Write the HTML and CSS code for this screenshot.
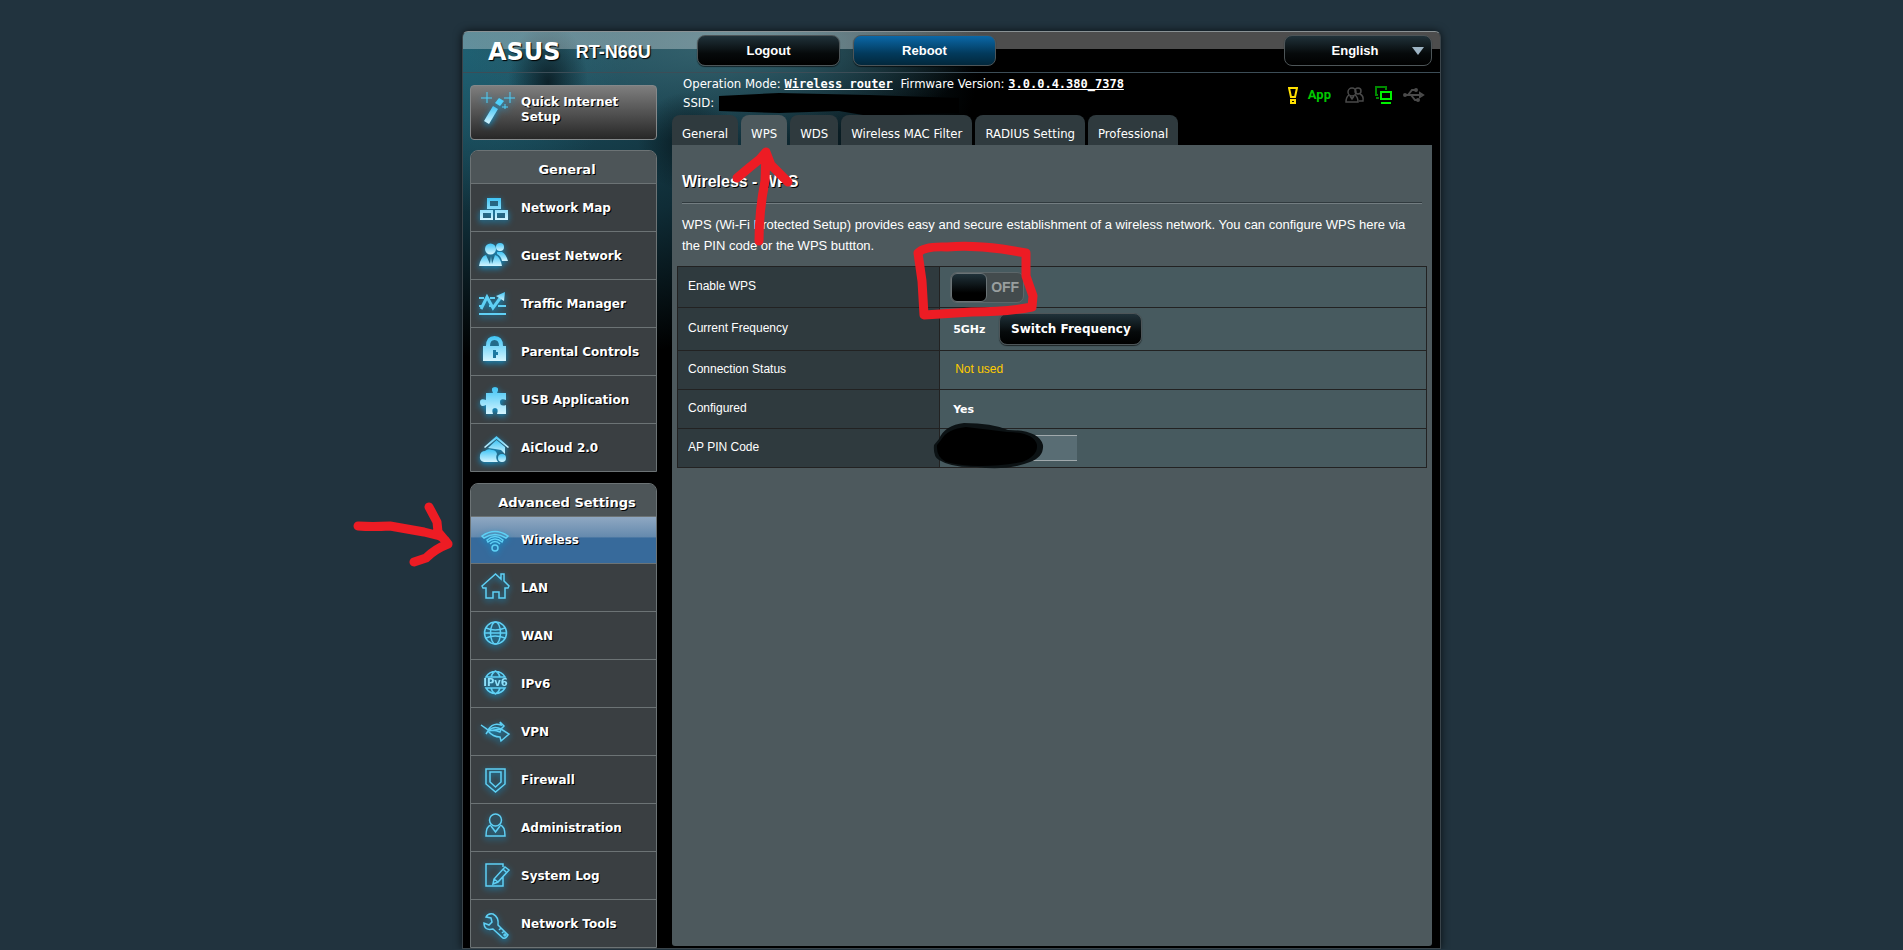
FILE: index.html
```html
<!doctype html>
<html lang="en">
<head>
    <meta charset="utf-8">
    <title>ASUS Wireless Router RT-N66U - WPS</title>
    <link rel="stylesheet" href="styles.css">
</head>

<body>
<div class="wrapper">
    <!-- top banner -->
    <header class="banner">
        <div class="brand"><span class="logo">ASUS</span><span class="model">RT-N66U</span></div>
        <button class="btn top-btn">Logout</button>
        <button class="btn top-btn reboot">Reboot</button>
        <div class="lang">
            <select class="btn lang-select" aria-label="Language">
                <option>English</option>
            </select>
            <span class="lang-arrow"></span>
        </div>
    </header>

    <div class="columns">
        <!-- left menu -->
        <nav class="sidebar">
            <a class="quick" href="#">
                <svg class="quick-icon" width="40" height="40" viewBox="0 0 40 40">
                    <defs>
                        <linearGradient id="ice" x1="0" y1="0" x2="0" y2="1">
                            <stop offset="0" stop-color="#3fc4f5"/>
                            <stop offset="1" stop-color="#d4f5ff"/>
                        </linearGradient>
                    </defs>
                    <path d="M5 31L14 16L19 19L10 34Z" fill="url(#ice)"/>
                    <path d="M16 13L20 8L25 11L21 16Z" fill="#4fd0fa"/>
                    <path d="M8 2V13M2 8H13M31 2V13M25 8H36M26 14V19M23 17H29" stroke="#4fd0fa" fill="none"/>
                </svg>
                <span>Quick Internet Setup</span>
            </a>

            <section class="menu">
                <h2>General</h2>
                <a class="item" href="#">
                    <svg class="icon solid" viewBox="0 0 32 32"><path fill-rule="evenodd" d="M8 6H22V17H8ZM11 9V14H19V9ZM1 18H14V28H1ZM4 21V26H12V21ZM16 18H29V28H16ZM18 21V26H26V21Z"/></svg>
                    <span>Network Map</span>
                </a>
                <a class="item" href="#">
                    <svg class="icon solid" viewBox="0 0 32 32"><circle cx="21" cy="7" r="4"/><path d="M18 12H23Q27 14 29 21H23Q22 16 18 14Z"/><circle cx="11.500" cy="9" r="5.500"/><path d="M0 26Q2 16 7 15L11 24L12 16L13 24L16 15Q21 16 23 26Z"/></svg>
                    <span>Guest Network</span>
                </a>
                <a class="item" href="#">
                    <svg class="icon" viewBox="0 0 32 32"><path d="M0 10H5M11 10H16M0 18H3M10 18H12M19 18H27M0 26H27" stroke-width="2"/><path d="M2 21L8 9L14 20L22 9" stroke-width="3"/><path class="fill" d="M17 8L26 4L25 13Z"/></svg>
                    <span>Traffic Manager</span>
                </a>
                <a class="item" href="#">
                    <svg class="icon solid" viewBox="0 0 32 32"><path fill-rule="evenodd" d="M4 10H7Q7 0 15.500 0Q24 0 24 10H27V25H4ZM11 10H20Q20 4 15.500 4Q11 4 11 10ZM14 14V22H17V19H19V16H17V14Z"/></svg>
                    <span>Parental Controls</span>
                </a>
                <a class="item" href="#">
                    <svg class="icon solid" viewBox="0 0 32 32"><path d="M7 9H14Q11 3 16 3Q21 3 18 9H27V16Q21 14 21 18Q21 23 27 21V30H18Q20 24 16 24Q12 24 14 30H7V21Q1 24 1 18Q1 14 7 16Z"/></svg>
                    <span>USB Application</span>
                </a>
                <a class="item" href="#">
                    <svg class="icon solid" viewBox="0 0 32 32"><path d="M17.500 4L30 15L29 16L17.500 7L6 16L5 15Z"/><path d="M17.500 8L26 15V22L22 18L16 17L9 16Z"/><path d="M5 30Q0 29 1 23Q2 19 6 19Q9 16 13 18Q17 18 18 22Q16 26 19 30Z"/><circle cx="23" cy="26" r="4"/></svg>
                    <span>AiCloud 2.0</span>
                </a>
            </section>

            <section class="menu advanced">
                <h2>Advanced Settings</h2>
                <a class="item active" href="#">
                    <svg class="icon" viewBox="0 0 32 32"><circle cx="16" cy="24" r="3"/><path d="M3 12Q16 3 29 12L27 14Q16 7 5 14ZM8 16Q16 9 24 16L23 18Q16 12 9 18ZM11 20Q16 15 21 20"/></svg>
                    <span>Wireless</span>
                </a>
                <a class="item" href="#">
                    <svg class="icon" viewBox="0 0 32 32"><path d="M3 14L16.500 2L22 7V2H25V9L30 14L29 16H26V26H20V20H14V26H7V16H4Z"/></svg>
                    <span>LAN</span>
                </a>
                <a class="item" href="#">
                    <svg class="icon" viewBox="0 0 32 32"><circle cx="16.500" cy="13" r="11"/><ellipse cx="16.500" cy="13" rx="5" ry="11"/><path d="M7 8Q16 12 26 8M7 18Q16 14 26 18M6 13H27"/></svg>
                    <span>WAN</span>
                </a>
                <a class="item" href="#">
                    <svg class="icon" viewBox="0 0 32 32"><path d="M7 9A11 11 0 0 1 26 9ZM7 20A11 11 0 0 0 26 20ZM12 9Q13 5 16.500 3Q20 5 21 9M12 20Q13 24 16.500 26Q20 24 21 20"/><text x="16.500" y="18" text-anchor="middle" class="ip">IPv6</text></svg>
                    <span>IPv6</span>
                </a>
                <a class="item" href="#">
                    <svg class="icon" viewBox="0 0 32 32"><path d="M2 9L9 14Q14 6 22 9L21 6L25 10L22 13Q15 9 9 15Q15 13 21 16L22 13L30 18L22 25L21 21Q14 21 9 15L7 18M2 9L8 13M9 15L22 13"/></svg>
                    <span>VPN</span>
                </a>
                <a class="item" href="#">
                    <svg class="icon" viewBox="0 0 32 32"><path d="M7 5H26V20L16.500 28L7 20ZM11 8H22V18L16.500 23L11 18Z"/></svg>
                    <span>Firewall</span>
                </a>
                <a class="item" href="#">
                    <svg class="icon" viewBox="0 0 32 32"><circle cx="16.500" cy="8" r="6"/><path d="M12 13Q7 14 7 24H26Q26 14 21 13M12 14L16.500 20L21 14"/></svg>
                    <span>Administration</span>
                </a>
                <a class="item" href="#">
                    <svg class="icon" viewBox="0 0 32 32"><path d="M24 7V4H7V26H24V17M14 24L15 19L26 7L30 10L19 22ZM24 9L27 12M15 19L19 22"/></svg>
                    <span>System Log</span>
                </a>
                <a class="item" href="#">
                    <svg class="icon" viewBox="0 0 32 32"><path d="M7 9L12 10L13 14L10 17L5 15Q5 23 14 21L24 30Q27 31 29 27L19 17Q20 9 14 6Q9 5 7 9ZM20 22L22 20M23 25L25 23"/><circle cx="26" cy="27" r="1"/></svg>
                    <span>Network Tools</span>
                </a>
            </section>
        </nav>

        <main class="main">
            <div class="info">
                <div class="info-text">
                    <div>Operation Mode: <a href="#">Wireless router</a> <span class="fw">Firmware Version: <a href="#">3.0.0.4.380_7378</a></span></div>
                    <div class="ssid">SSID:
                        <svg class="redact-ssid" width="240" height="23" viewBox="0 0 240 23"><path d="M0 3L60 0L150 2L240 5V20L150 23L120 18L60 20L0 18Z"/></svg>
                    </div>
                </div>
                <div class="status">
                    <svg width="10" height="18" viewBox="0 0 10 18" fill="none" stroke="#ffe000" stroke-width="2"><path d="M1 2H9L7 11H3Z"/><path d="M3 14H7V17H3Z"/></svg>
                    <a class="app" href="#">App</a>
                    <svg width="20" height="18" viewBox="0 0 20 18" fill="none" stroke="#4a4a4a" stroke-width="1.500"><circle cx="13" cy="5" r="3"/><path d="M15 8Q19 10 18 15H14"/><circle cx="7" cy="6" r="4"/><path d="M4 9Q1 11 1 16H13Q13 11 10 9M5 10L7 13L9 10"/></svg>
                    <svg width="18" height="18" viewBox="0 0 18 18" fill="none" stroke-width="2"><path d="M3 9H1V1H11V4M1 12H4" stroke="#008a00"/><path d="M6 6H16V13H6ZM6 17H16" stroke="#00f000"/></svg>
                    <svg width="22" height="14" viewBox="0 0 22 14" fill="none" stroke="#4a4a4a" stroke-width="2"><path d="M1 7H18M5 7L9 2H13M8 7L12 12H15"/><circle cx="2" cy="7" r="1"/><path d="M17 5L20 7L17 9Z"/><circle cx="13" cy="2" r="1"/><circle cx="15" cy="12" r="1"/></svg>
                </div>
            </div>

            <div class="tabs">
                <a href="#">General</a>
                <a class="current" href="#">WPS</a>
                <a href="#">WDS</a>
                <a href="#">Wireless MAC Filter</a>
                <a href="#">RADIUS Setting</a>
                <a href="#">Professional</a>
            </div>

            <div class="panel">
                <h1>Wireless - WPS</h1>
                <p class="desc">WPS (Wi-Fi Protected Setup) provides easy and secure establishment of a wireless network. You can configure WPS here via the PIN code or the WPS buttton.</p>

                <table class="settings">
                    <tr class="row-wps">
                        <th><label for="wps">Enable WPS</label></th>
                        <td><input class="toggle" type="checkbox" id="wps"><label class="switch" for="wps"><span class="knob"></span><span class="state">OFF</span></label></td>
                    </tr>
                    <tr class="row-freq">
                        <th>Current Frequency</th>
                        <td><div class="freq"><b>5GHz</b><button class="btn freq-btn">Switch Frequency</button></div></td>
                    </tr>
                    <tr>
                        <th>Connection Status</th>
                        <td class="status-text">Not used</td>
                    </tr>
                    <tr>
                        <th>Configured</th>
                        <td><b>Yes</b></td>
                    </tr>
                    <tr>
                        <th><label for="pin">AP PIN Code</label></th>
                        <td class="pin-cell"><input class="pin" type="text" id="pin" readonly></td>
                    </tr>
                </table>
            </div>
        </main>
    </div>

    <!-- hand-drawn marks over the page, origin is the wrapper corner -->
    <svg class="marks" width="979" height="919" viewBox="0 0 979 919">
        <g class="blob">
            <path class="edge" d="M477 408Q483 394 502 392Q530 392 546 399Q577 399 581 414Q582 426 568 431Q545 440 515 436Q490 437 477 429Q471 426 472 414Z"/>
            <path d="M479 409Q485 398 504 396Q530 399 545 401Q572 401 575 414Q576 425 560 431Q515 439 484 431Q474 426 475 414Z"/>
        </g>
        <path class="red" d="M-104 495Q-90 496 -72 495Q-55 498 -38 501L-26 504Q-20 504 -14 513M-33 476L-25 491L-24 501L-14 513Q-27 518 -36 527L-48 531"/>
        <path class="red" d="M297 210Q297 180 303 150L304 122M275 147L288 136L298 128L304 121L309 134L326 151"/>
        <path class="red" d="M462 284L460 250L456 222Q462 215 485 216Q510 214 540 218L564 222L564 245L571 265L570 276Q545 281 510 281L462 284"/>
    </svg>
</div>
</body>
</html>
```
FILE: styles.css
```css
* {
    box-sizing: border-box;
}
body {
    margin: 0;
    background: #21333e;
    font: 12px "Liberation Sans", Arial, sans-serif;
    color: #fff;
    overflow: hidden;
}
a {
    color: #fff;
    text-decoration: none;
}

.wrapper {
    position: relative;
    width: 94%;
    max-width: 979px;
    margin: 31px auto 0;
    border: 1px solid #3a444a;
    border-top-color: #8a9295;
    border-radius: 6px 6px 0 0;
    box-shadow: 0 0 8px rgba(0, 0, 0, 0.7);
    background:
        radial-gradient(ellipse 40px 60px at 85px 50px, rgba(8, 20, 26, 0.8), transparent),
        radial-gradient(ellipse 50px 50px at 225px 110px, rgba(7, 21, 26, 0.8), transparent),
        radial-gradient(ellipse 260px 100px at 260px 10px, #366470, transparent),
        radial-gradient(ellipse 160px 160px at 0 20px, #1f6072, transparent),
        radial-gradient(ellipse 440px 330px at 80px 0, #1f5768, #0f2c36 60%, transparent),
        #000;
}

/* banner */
.banner {
    display: flex;
    align-items: flex-start;
    gap: 13px;
    height: 41px;
    padding: 3px 8px 0 25px;
    border-bottom: 1px solid #3c4d57;
    border-radius: 5px 5px 0 0;
    background: linear-gradient(rgba(255, 255, 255, 0.3), rgba(255, 255, 255, 0.3)) 0 0 / 100% 17px no-repeat;
}
.brand {
    display: flex;
    align-items: center;
    width: 196px;
    height: 34px;
    gap: 15px;
    text-shadow: 1px 1px 1px #000;
}
.logo {
    font: bold 24px "DejaVu Sans", Verdana, sans-serif;
}
.model {
    font-size: 18px;
    font-weight: bold;
}
.btn {
    border: 1px solid #4d5558;
    border-radius: 8px;
    background: linear-gradient(#20323a, #060a0b 60%, #000);
    color: #fff;
    font: bold 13px "Liberation Sans", Arial, sans-serif;
    box-shadow: 0 1px 1px rgba(0, 0, 0, 0.6);
}
.top-btn {
    width: 143px;
    height: 31px;
}
.reboot {
    background: linear-gradient(#0b68a8, #023a5c 60%, #02283c);
}
.lang {
    position: relative;
    margin-left: auto;
}
.lang-select {
    width: 148px;
    height: 31px;
    padding: 0 6px 0 0;
    appearance: none;
    text-align: center;
    text-align-last: center;
}
.lang-arrow {
    position: absolute;
    right: 8px;
    top: 12px;
    border: 6px solid transparent;
    border-top: 8px solid #9db4c4;
    border-bottom: 0;
    pointer-events: none;
}

.columns {
    display: grid;
    grid-template-columns: 187px 1fr;
    gap: 15px;
    padding: 0 8px 0 7px;
}

/* left menu */
.sidebar {
    padding-top: 12px;
    font: bold 12px "DejaVu Sans", Verdana, sans-serif;
    text-shadow: 1px 1px 0 #000;
}
.quick {
    display: flex;
    gap: 2px;
    height: 55px;
    padding: 4px 20px 0 8px;
    border: 1px solid #84888a;
    border-radius: 4px;
    background: linear-gradient(#7e7e7e, #272727);
    line-height: 15px;
}
.quick span {
    padding-top: 5px;
}
.quick-icon {
    flex: none;
}
.menu {
    margin-top: 10px;
    border: 1px solid #6c7375;
    border-radius: 8px 8px 0 0;
    background: #3a3f42;
    overflow: hidden;
}
.advanced {
    margin-top: 11px;
}
.menu h2 {
    margin: 0;
    height: 32px;
    padding-left: 7px;
    background: #4d5558;
    font-size: 13px;
    line-height: 37px;
    text-align: center;
}
.item {
    display: flex;
    align-items: center;
    gap: 10px;
    height: 48px;
    padding-left: 8px;
    border-top: 1px solid #6c7375;
}
.item.active {
    height: 47px;
    background: linear-gradient(#8fa8c2, #6489ad 44%, #376a9b 45%, #376a9b);
}
.icon {
    width: 32px;
    height: 32px;
    fill: none;
    stroke: #5fd0f5;
    stroke-width: 1.500;
}
.icon, .quick-icon {
    filter: drop-shadow(0 2px 3px #1093cc);
}
.icon.solid, .icon .fill {
    fill: url(#ice);
    stroke: none;
}
.ip {
    font: bold 10px "DejaVu Sans", sans-serif;
    fill: #8fe0fa;
    stroke: none;
    text-shadow: none;
}

/* operation mode, firmware, status icons */
.info {
    display: flex;
    justify-content: space-between;
    height: 42px;
    padding: 1px 7px 0 11px;
    font: 13px/19px "DejaVu Sans Condensed", Tahoma, sans-serif;
}
.info-text a {
    font: bold 12px "DejaVu Sans Mono", monospace;
    text-decoration: underline;
}
.fw {
    margin-left: 4px;
}
.ssid {
    display: flex;
    gap: 5px;
}
.status {
    display: flex;
    align-items: center;
    gap: 10px;
}
.status .app {
    margin-right: 4px;
    color: #00c800;
    font: bold 13px Roboto, sans-serif;
}

.tabs {
    display: flex;
    gap: 3px;
    font: 13px/37px "DejaVu Sans Condensed", Tahoma, sans-serif;
}
.tabs a {
    height: 30px;
    padding: 0 10px;
    border-radius: 8px 8px 0 0;
    background: #2f3a3e;
}
.tabs .current {
    background: #4d595d;
}

.panel {
    height: 801px;
    padding: 27px 5px 0;
    border-radius: 0 0 3px 3px;
    background: #4d595d;
}
.panel h1 {
    margin: 0 5px;
    padding-bottom: 10px;
    border-bottom: 1px solid #303a3e;
    box-shadow: 0 1px 0 #737d81;
    font-size: 16px;
    line-height: 20px;
    text-shadow: 1px 1px 0 #000;
}
.desc {
    margin: 11px 5px 10px;
    font-size: 13px;
    line-height: 21px;
}

/* settings table */
.settings {
    width: 100%;
    border-collapse: collapse;
}
.settings th, .settings td {
    height: 39px;
    padding: 0 10px 2px;
    border: 1px solid #222;
}
.settings th {
    width: 35%;
    background: #2f3a3e;
    font-weight: normal;
    text-align: left;
}
.settings td {
    padding: 0 13px;
    background: #475a5f;
}
.settings b {
    font: bold 11px "DejaVu Sans", Verdana, sans-serif;
}
.settings .row-wps td, .settings .row-wps th {
    height: 41px;
}
.settings .row-freq td, .settings .row-freq th {
    height: 43px;
}
.settings .status-text {
    padding: 0 15px 2px;
    color: #fc0;
}
.toggle {
    position: absolute;
    opacity: 0;
}
.switch {
    display: flex;
    align-items: center;
    width: 74px;
    height: 31px;
    margin-left: -3px;
    border: 1px solid #5c6669;
    border-radius: 7px;
    background: #434b4d;
}
.knob {
    width: 36px;
    height: 29px;
    border: 1px solid #6a7376;
    border-radius: 6px;
    background: linear-gradient(#20323a, #000 70%);
}
.state {
    margin-left: 4px;
    color: #999f9f;
    font-size: 14px;
    font-weight: bold;
}
.freq {
    display: flex;
    align-items: center;
    gap: 14px;
}
.freq-btn {
    width: 143px;
    height: 32px;
    font: bold 12px "DejaVu Sans", Verdana, sans-serif;
}
.settings .pin-cell {
    padding: 0 2px;
}
.pin {
    display: block;
    width: 135px;
    height: 26px;
    border: 0;
    border-top: 1px solid #a0a9ac;
    border-bottom: 1px solid #a0a9ac;
    background: #596d74;
    color: #fff;
}

/* marks */
.marks {
    position: absolute;
    left: -1px;
    top: -1px;
    overflow: visible;
    pointer-events: none;
}
.red {
    fill: none;
    stroke: #ed1c24;
    stroke-width: 9;
    stroke-linecap: round;
    stroke-linejoin: round;
}
.edge {
    fill: #0c1214;
}
```
